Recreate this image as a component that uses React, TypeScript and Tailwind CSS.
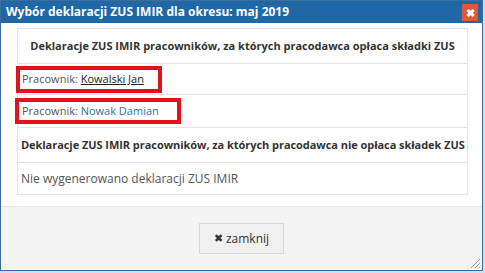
import React from "react";

export default function App() {
  const font = { fontFamily: '"Open Sans", "Noto Sans", sans-serif' };
  return (
    <div className="w-[485px] h-[273px] bg-[#cfe0ee] overflow-hidden" style={font}>
      <div className="w-[483px] h-[271px] border border-[#3b6e9c] bg-white flex flex-col relative">
        <div className="h-[22px] bg-[#2067a6] flex items-center justify-between pl-[5px] pr-[4px] shrink-0">
          <span className="text-white font-bold text-[12px] leading-none">Wybór deklaracji ZUS IMIR dla okresu: maj 2019</span>
          <span className="w-[16px] h-[17px] bg-[#e0573f] flex items-center justify-center text-white text-[11px] font-bold leading-none">✖</span>
        </div>
        <div className="flex-1 pt-[5px] pl-[16px] pr-[14px]">
          <div className="border border-[#e3e3e3] text-[11px] text-[#333]">
            <div className="h-[35px] flex items-center justify-center font-bold border-b border-[#e3e3e3] whitespace-nowrap">
              Deklaracje ZUS IMIR pracowników, za których pracodawca opłaca składki ZUS
            </div>
            <div className="h-[31px] flex items-center border-b border-[#e3e3e3] pl-[3px]">
              <span className="border-[4px] border-[#e5101e] h-[27px] w-[146px] ml-[-5px] flex items-center pl-[2px]">
                <span className="text-[#555]">Pracownik:&nbsp;</span>
                <span className="underline text-[#222]">Kowalski Jan</span>
              </span>
            </div>
            <div className="h-[33px] flex items-center border-b border-[#e3e3e3] pl-[3px]">
              <span className="border-[4px] border-[#e5101e] h-[26px] w-[166px] ml-[-6px] flex items-center pl-[3px]">
                <span className="text-[#555]">Pracownik:&nbsp;</span>
                <span className="text-[#2f6f9f]">Nowak Damian</span>
              </span>
            </div>
            <div className="h-[35px] flex items-center pl-[3px] font-bold border-b border-[#e3e3e3] whitespace-nowrap tracking-[-0.05px]">
              Deklaracje ZUS IMIR pracowników, za których pracodawca nie opłaca składek ZUS
            </div>
            <div className="h-[31px] flex items-center pl-[3px] text-[#555] text-[12px]">Nie wygenerowano deklaracji ZUS IMIR</div>
          </div>
        </div>
        <div className="h-[64px] border-t border-[#e3e3e3] bg-[#f4f4f4] flex items-center justify-center shrink-0">
          <button className="w-[85px] h-[31px] border border-[#d8d8d8] bg-[#f0f0f0] text-[12px] text-[#333] flex items-center justify-center gap-[3px]">
            <span className="text-[11px]">✖</span>
            <span>zamknij</span>
          </button>
        </div>
        <svg className="absolute right-[1px] bottom-[1px]" width="12" height="12" viewBox="0 0 12 12">
          <path d="M11 2 L2 11 M11 6 L6 11 M11 10 L10 11" stroke="#999" strokeWidth="1" />
        </svg>
      </div>
    </div>
  );
}
